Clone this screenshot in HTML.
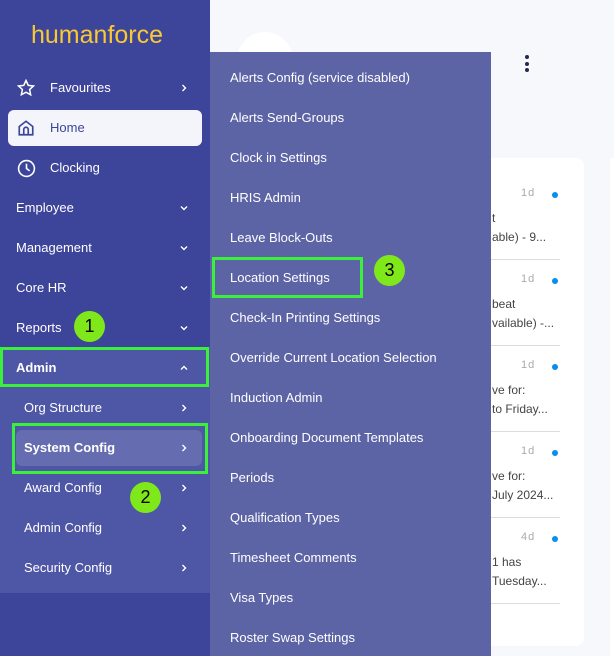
<!DOCTYPE html>
<html><head><style>
*{margin:0;padding:0;box-sizing:border-box}
body{width:614px;height:656px;overflow:hidden;background:#f7f8fc;font-family:"Liberation Sans",sans-serif;position:relative}
.sb{position:absolute;left:0;top:0;width:210px;height:656px;background:#3c4599}
.logo{position:absolute;left:31px;top:21px;color:#f9c934;font-size:25px}
.it{position:absolute;left:0;width:210px;height:40px;color:#fff;font-size:13px;line-height:40px}
.it .t{position:absolute;left:16px}
.it.ic .t{left:50px}
.ch{position:absolute;right:22px;top:16px;width:8px;height:8px}
.home{position:absolute;left:8px;top:110px;width:194px;height:36px;background:#f3f5fb;border-radius:6px;color:#3c4599;font-size:13px;line-height:36px}
.adm{position:absolute;left:0;top:347px;width:210px;height:246px;background:#4e57a5}
.sub{position:absolute;left:210px;top:52px;width:281px;height:604px;background:#5c64a6}
.sub div{position:absolute;left:20px;color:#fff;font-size:13px}
.card{position:absolute;left:440px;top:158px;width:144px;height:488px;background:#fff;border-radius:8px}
.row{position:absolute;left:0;width:120px;height:86px;border-bottom:1px solid #ddd;font-size:12px;color:#444}
.d{position:absolute;left:81px;top:13px;color:#aaa;font-size:11px;letter-spacing:1px}
.dot{position:absolute;left:112px;top:18px;width:6px;height:6px;border-radius:3px;background:#0a8cf0}
.l1{position:absolute;left:52px;top:37px}
.l2{position:absolute;left:52px;top:56px}
.gb{position:absolute;border:3px solid #3bef3b}
.num{position:absolute;width:31px;height:31px;border-radius:50%;background:#7ee81a;color:#000;font-size:18px;text-align:center;line-height:31px}
</style></head><body>
<svg width="0" height="0" style="position:absolute"><defs>
<symbol id="r" viewBox="0 0 8 8"><path d="M2.5 1l3 3-3 3" fill="none" stroke="#fff" stroke-width="1.4"/></symbol>
<symbol id="dn" viewBox="0 0 8 8"><path d="M1 2.5l3 3 3-3" fill="none" stroke="#fff" stroke-width="1.4"/></symbol>
<symbol id="up" viewBox="0 0 8 8"><path d="M1 5.5l3-3 3 3" fill="none" stroke="#fff" stroke-width="1.4"/></symbol>
</defs></svg>
<div style="position:absolute;left:237px;top:32px;width:56px;height:40px;background:#fff;border-radius:28px 28px 0 0"></div>
<div style="position:absolute;left:524px;top:55px;width:5px;height:17px;display:flex;flex-direction:column;justify-content:space-between;align-items:center"><span style="width:4px;height:4px;border-radius:2px;background:#222a55"></span><span style="width:4px;height:4px;border-radius:2px;background:#222a55"></span><span style="width:4px;height:4px;border-radius:2px;background:#222a55"></span></div>
<div class="card">
<div class="row" style="top:16px"><span class="d">1d</span><span class="dot"></span><span class="l1">t</span><span class="l2">able) - 9...</span></div>
<div class="row" style="top:102px"><span class="d">1d</span><span class="dot"></span><span class="l1">beat</span><span class="l2">vailable) -...</span></div>
<div class="row" style="top:188px"><span class="d">1d</span><span class="dot"></span><span class="l1">ve for:</span><span class="l2">to Friday...</span></div>
<div class="row" style="top:274px"><span class="d">1d</span><span class="dot"></span><span class="l1">ve for:</span><span class="l2">July 2024...</span></div>
<div class="row" style="top:360px"><span class="d">4d</span><span class="dot"></span><span class="l1">1 has</span><span class="l2">Tuesday...</span></div>
</div>
<div style="position:absolute;left:610px;top:158px;width:4px;height:498px;background:#fff"></div>
<div class="sb">
<div class="logo">humanforce</div>
<div class="it ic" style="top:68px"><svg style="position:absolute;left:17px;top:11px" width="18" height="18" viewBox="0 0 24 24" fill="none" stroke="#fff" stroke-width="2"><path d="M12 2l3 6.5 7 .8-5.2 4.8 1.4 7L12 17.6 5.8 21l1.4-7L2 9.3l7-.8z"/></svg><span class="t">Favourites</span><svg class="ch"><use href="#r"/></svg></div>
<div class="home"><svg style="position:absolute;left:9px;top:9px" width="18" height="18" viewBox="0 0 24 24" fill="none" stroke="#3c4599" stroke-width="2.2"><path d="M3 21V10l9-7 9 7v11zM9 21v-7a3 3 0 0 1 6 0v7"/></svg><span style="position:absolute;left:42px">Home</span></div>
<div class="it ic" style="top:148px"><svg style="position:absolute;left:17px;top:11px" width="19" height="19" viewBox="0 0 24 24" fill="none" stroke="#fff" stroke-width="2"><circle cx="12" cy="12" r="10"/><path d="M12 6v6l4 3"/></svg><span class="t">Clocking</span></div>
<div class="it" style="top:188px"><span class="t">Employee</span><svg class="ch"><use href="#dn"/></svg></div>
<div class="it" style="top:228px"><span class="t">Management</span><svg class="ch"><use href="#dn"/></svg></div>
<div class="it" style="top:268px"><span class="t">Core HR</span><svg class="ch"><use href="#dn"/></svg></div>
<div class="it" style="top:308px"><span class="t">Reports</span><svg class="ch"><use href="#dn"/></svg></div>
<div class="adm"></div>
<div class="it" style="top:348px;font-weight:bold"><span class="t">Admin</span><svg class="ch"><use href="#up"/></svg></div>
<div style="position:absolute;left:16px;top:430px;width:186px;height:36px;background:#656db0;border-radius:6px"></div>
<div class="it" style="top:388px"><span class="t" style="left:24px">Org Structure</span><svg class="ch"><use href="#r"/></svg></div>
<div class="it" style="top:428px;font-weight:bold"><span class="t" style="left:24px">System Config</span><svg class="ch"><use href="#r"/></svg></div>
<div class="it" style="top:468px"><span class="t" style="left:24px">Award Config</span><svg class="ch"><use href="#r"/></svg></div>
<div class="it" style="top:508px"><span class="t" style="left:24px">Admin Config</span><svg class="ch"><use href="#r"/></svg></div>
<div class="it" style="top:548px"><span class="t" style="left:24px">Security Config</span><svg class="ch"><use href="#r"/></svg></div>
</div>
<div class="sub">
<div style="top:18px">Alerts Config (service disabled)</div>
<div style="top:58px">Alerts Send-Groups</div>
<div style="top:98px">Clock in Settings</div>
<div style="top:138px">HRIS Admin</div>
<div style="top:178px">Leave Block-Outs</div>
<div style="top:218px">Location Settings</div>
<div style="top:258px">Check-In Printing Settings</div>
<div style="top:298px">Override Current Location Selection</div>
<div style="top:338px">Induction Admin</div>
<div style="top:378px">Onboarding Document Templates</div>
<div style="top:418px">Periods</div>
<div style="top:458px">Qualification Types</div>
<div style="top:498px">Timesheet Comments</div>
<div style="top:538px">Visa Types</div>
<div style="top:578px">Roster Swap Settings</div>
</div>
<div class="gb" style="left:0;top:347px;width:209px;height:40px"></div>
<div class="gb" style="left:12px;top:423px;width:196px;height:51px"></div>
<div class="gb" style="left:212px;top:257px;width:151px;height:41px"></div>
<div class="num" style="left:74px;top:311px">1</div>
<div class="num" style="left:130px;top:482px">2</div>
<div class="num" style="left:374px;top:255px">3</div>
</body></html>
